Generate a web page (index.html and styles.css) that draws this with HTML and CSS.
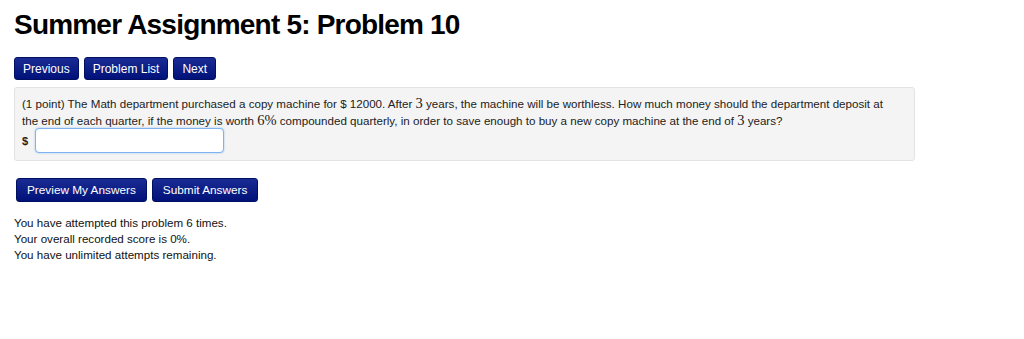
FILE: index.html
```html
<!DOCTYPE html>
<html>
<head>
  <title>Summer Assignment 5: Problem 10</title>
  <link rel="stylesheet" href="styles.css">
</head>
<body>
  <h1 class="problem-title">Summer Assignment 5: Problem 10</h1>
  <div class="nav-buttons">
    <button class="nav-btn">Previous</button>
    <button class="nav-btn">Problem List</button>
    <button class="nav-btn">Next</button>
  </div>
  <div class="problem-box">
    <div class="problem-text">
      (1 point) The Math department purchased a copy machine for $ 12000. After <span class="math">3</span> years, the machine will be worthless. How much money should the department deposit at the end of each quarter, if the money is worth <span class="math">6%</span> compounded quarterly, in order to save enough to buy a new copy machine at the end of <span class="math">3</span> years?
    </div>
    <div class="answer-row">
      <span class="dollar">$</span>
      <input type="text" class="answer-input">
    </div>
  </div>
  <div class="submit-buttons">
    <button class="nav-btn big">Preview My Answers</button>
    <button class="nav-btn big">Submit Answers</button>
  </div>
  <div class="attempts">
    <div>You have attempted this problem 6 times.</div>
    <div>Your overall recorded score is 0%.</div>
    <div>You have unlimited attempts remaining.</div>
  </div>
</body>
</html>
```

FILE: styles.css
```css
body {
  margin: 0;
  padding: 0 14px;
  font-family: "Liberation Sans", Arial, sans-serif;
  font-size: 11.6px;
  color: #222;
  background: #fff;
}

.problem-title {
  margin: 0;
  padding-top: 8px;
  font-size: 28px;
  line-height: 34px;
  font-weight: bold;
  color: #000;
  letter-spacing: -0.8px;
}

.nav-buttons {
  display: flex;
  gap: 5px;
  margin-top: 15px;
}

.nav-btn {
  font-family: "Liberation Sans", Arial, sans-serif;
  font-size: 12px;
  color: #fff;
  height: 23px;
  padding: 0 8px;
  border: 1px solid #001060;
  border-radius: 3px;
  background: linear-gradient(#1a2c93, #00127a);
  cursor: pointer;
}

.problem-box {
  margin-top: 7px;
  width: 885px;
  padding: 7px;
  background: #f4f4f4;
  border: 1px solid #e3e3e3;
  border-radius: 3px;
}

.problem-text {
  padding-right: 20px;
  line-height: 17px;
  color: #222;
}

.math {
  font-family: "Liberation Serif", "Times New Roman", serif;
  font-size: 14.5px;
  line-height: 1;
}

.answer-row {
  display: flex;
  align-items: center;
  gap: 7px;
  margin-top: -1px;
}

.dollar {
  font-weight: bold;
  font-size: 11px;
}

.answer-input {
  width: 189px;
  height: 25px;
  box-sizing: border-box;
  padding: 0 6px;
  border: 1px solid #7fb2f0;
  border-radius: 4px;
  box-shadow: 0 0 2px rgba(82, 168, 236, 0.6);
  background: #fff;
}

.submit-buttons {
  display: flex;
  gap: 5px;
  margin-top: 17px;
  padding-left: 2px;
}

.nav-btn.big {
  height: 24px;
  padding: 0 10px;
  font-size: 11.8px;
}

.attempts {
  margin-top: 13px;
  line-height: 16px;
  color: #111;
}
```
